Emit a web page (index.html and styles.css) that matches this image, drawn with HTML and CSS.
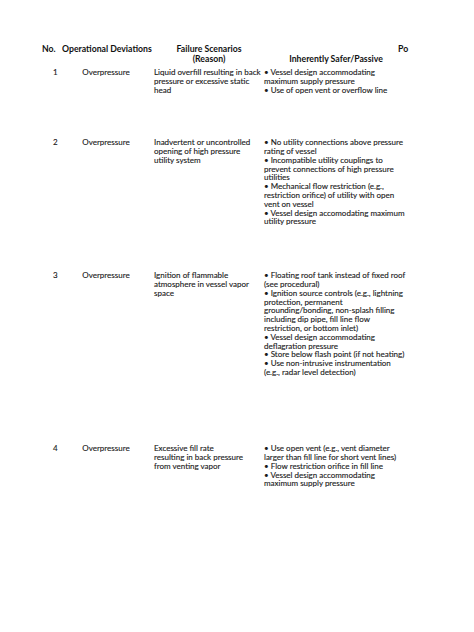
FILE: index.html
```html
<!DOCTYPE html>
<html lang="en">
<head>
<meta charset="utf-8">
<title>Overpressure – Inherently Safer Measures</title>
<link rel="stylesheet" href="styles.css">
</head>
<body>
<div class="page">
  <div class="row head">
    <div class="cell c1">No.</div>
    <div class="cell c2 center">Operational Deviations</div>
    <div class="cell c3 center"><span class="ln">Failure Scenarios</span><span class="ln">(Reason)</span></div>
    <div class="cell c4 center shift"><span class="ln">&nbsp;</span><span class="ln">Inherently Safer/Passive</span></div>
    <div class="cell c5">Po</div>
  </div>

  <div class="row r1">
    <div class="cell c1 num">1</div>
    <div class="cell c2 center">Overpressure</div>
    <div class="cell c3"><span class="ln">Liquid overfill resulting in back</span><span class="ln">pressure or excessive static</span><span class="ln">head</span></div>
    <div class="cell c4"><span class="ln">• Vessel design accommodating</span><span class="ln">maximum supply pressure</span><span class="ln">• Use of open vent or overflow line</span></div>
    <div class="cell c5"></div>
  </div>

  <div class="row r2">
    <div class="cell c1 num">2</div>
    <div class="cell c2 center">Overpressure</div>
    <div class="cell c3"><span class="ln">Inadvertent or uncontrolled</span><span class="ln">opening of high pressure</span><span class="ln">utility system</span></div>
    <div class="cell c4"><span class="ln">• No utility connections above pressure</span><span class="ln">rating of vessel</span><span class="ln">• Incompatible utility couplings to</span><span class="ln">prevent connections of high pressure</span><span class="ln">utilities</span><span class="ln">• Mechanical flow restriction (e.g.,</span><span class="ln">restriction orifice) of utility with open</span><span class="ln">vent on vessel</span><span class="ln">• Vessel design accomodating maximum</span><span class="ln">utility pressure</span></div>
    <div class="cell c5"></div>
  </div>

  <div class="row r3">
    <div class="cell c1 num">3</div>
    <div class="cell c2 center">Overpressure</div>
    <div class="cell c3"><span class="ln">Ignition of flammable</span><span class="ln">atmosphere in vessel vapor</span><span class="ln">space</span></div>
    <div class="cell c4"><span class="ln">• Floating roof tank instead of fixed roof</span><span class="ln">(see procedural)</span><span class="ln">• Ignition source controls (e.g., lightning</span><span class="ln">protection, permanent</span><span class="ln">grounding/bonding, non-splash filling</span><span class="ln">including dip pipe, fill line flow</span><span class="ln">restriction, or bottom inlet)</span><span class="ln">• Vessel design accommodating</span><span class="ln">deflagration pressure</span><span class="ln">• Store below flash point (if not heating)</span><span class="ln">• Use non-intrusive instrumentation</span><span class="ln">(e.g., radar level detection)</span></div>
    <div class="cell c5"></div>
  </div>

  <div class="row r4">
    <div class="cell c1 num">4</div>
    <div class="cell c2 center">Overpressure</div>
    <div class="cell c3"><span class="ln">Excessive fill rate</span><span class="ln">resulting in back pressure</span><span class="ln">from venting vapor</span></div>
    <div class="cell c4"><span class="ln">• Use open vent (e.g., vent diameter</span><span class="ln">larger than fill line for short vent lines)</span><span class="ln">• Flow restriction orifice in fill line</span><span class="ln">• Vessel design accommodating</span><span class="ln">maximum supply pressure</span></div>
    <div class="cell c5"></div>
  </div>
</div>
</body>
</html>
```
FILE: styles.css
```css
html, body {
  margin: 0;
  padding: 0;
  background: #ffffff;
}
.page {
  width: 474px;
  height: 632px;
  box-sizing: border-box;
  padding: 44px 0 0 40px;
  font-family: Lato, "Open Sans", sans-serif;
  color: #1a1a1a;
  overflow: hidden;
}
.row {
  display: flex;
  align-items: flex-start;
  font-size: 8px;
  line-height: 8.8px;
  -webkit-text-stroke: 0.12px #1a1a1a;
}
.row.head {
  font-weight: bold;
  font-size: 8.7px;
  line-height: 9.5px;
  color: #111111;
  -webkit-text-stroke: 0;
  height: 24.3px;
}
.r1 { height: 70px; }
.r2 { height: 133px; }
.r3 { height: 173px; }
.cell {
  white-space: nowrap;
  box-sizing: border-box;
}
.ln { display: block; }
.center { text-align: center; }
.c1 { width: 22px; padding-left: 2px; }
.c1.num { padding-left: 13px; }
.c2 { width: 88px; }
.c3 { width: 114px; padding-left: 4px; }
.c4 { width: 132px; }
.c4.shift { padding-left: 12px; }
.c5 { flex: 1; padding-left: 2px; }
```
